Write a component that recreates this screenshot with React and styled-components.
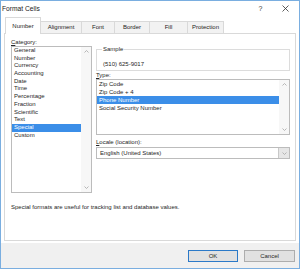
import React from 'react';
import styled, { createGlobalStyle } from 'styled-components';

const GlobalStyle = createGlobalStyle`
  html, body {
    margin: 0;
    padding: 0;
    background: #fff;
  }
  body {
    font-family: 'Liberation Sans', Arial, sans-serif;
  }
`;

const Dialog = styled.div`
  width: 300px;
  height: 269px;
  box-sizing: border-box;
  border: 1px solid #7aaee0;
  background: #fff;
  display: flex;
  flex-direction: column;
  color: #262626;
  font-size: 6px;
`;

const TitleBar = styled.div`
  height: 14px;
  display: flex;
  align-items: center;
  padding: 0 1px 0 1px;
`;

const Title = styled.div`
  flex: 1;
  font-size: 6.7px;
  color: #222;
`;

const TitleButton = styled.div`
  width: 25px;
  height: 14px;
  display: flex;
  align-items: center;
  justify-content: center;
  font-size: 7px;
  color: #333;
`;

const Body = styled.div`
  flex: 1;
  display: flex;
  flex-direction: column;
  padding: 0 3px 2px 3px;
`;

const TabRow = styled.div`
  height: 18px;
  display: flex;
  align-items: flex-end;
  padding-left: 1px;
`;

const Tab = styled.div`
  box-sizing: border-box;
  width: ${(p) => p.$w}px;
  height: ${(p) => (p.$active ? 17 : 12)}px;
  margin-bottom: ${(p) => (p.$active ? -1 : 0)}px;
  margin-left: ${(p) => (p.$first ? 0 : -1)}px;
  border: 1px solid #d9d9d9;
  border-bottom: none;
  background: ${(p) => (p.$active ? '#fff' : '#f2f2f2')};
  position: relative;
  z-index: ${(p) => (p.$active ? 1 : 0)};
  text-align: center;
  line-height: 8px;
  padding-top: ${(p) => (p.$active ? 4 : 1)}px;
  color: #222;
`;

const Panel = styled.div`
  flex: 1;
  border: 1px solid #d9d9d9;
  background: #fff;
  padding: 4px 4px 0 6px;
  display: flex;
  flex-direction: column;
`;

const Columns = styled.div`
  display: grid;
  grid-template-columns: 81px 194px;
  column-gap: 4px;
`;

const Column = styled.div`
  display: flex;
  flex-direction: column;
  padding-top: ${(p) => p.$top || 0}px;
`;

const Label = styled.div`
  line-height: 8px;
  margin-top: ${(p) => p.$mt || 0}px;
  u {
    text-decoration: underline;
  }
`;

const ListBox = styled.div`
  box-sizing: border-box;
  height: ${(p) => p.$h}px;
  border: 1px solid #bcbcbc;
  display: flex;
`;

const Items = styled.div`
  flex: 1;
  display: flex;
  flex-direction: column;
`;

const Item = styled.div`
  height: ${(p) => p.$rh}px;
  line-height: ${(p) => p.$rh}px;
  padding-left: 2px;
  white-space: nowrap;
  background: ${(p) => (p.$selected ? '#3b8ee8' : 'transparent')};
  color: ${(p) => (p.$selected ? '#fff' : '#262626')};
`;

const ScrollBar = styled.div`
  width: 10px;
  background: #f7f7f7;
  display: flex;
  flex-direction: column;
  justify-content: space-between;
  align-items: center;
  padding: 3px 0;
  box-sizing: border-box;
`;

const GroupBox = styled.fieldset`
  margin: 0;
  padding: 7px 6px 2px 6px;
  border: 1px solid #dcdcdc;
  min-width: 0;
  line-height: 8px;

  legend {
    padding: 0 1px;
    margin-left: -1px;
    line-height: 8px;
  }
`;

const Combo = styled.div`
  box-sizing: border-box;
  height: 12px;
  margin-top: 1px;
  border: 1px solid #bcbcbc;
  display: flex;
  align-items: stretch;
`;

const ComboText = styled.div`
  flex: 1;
  line-height: 10px;
  padding-left: 3px;
`;

const ComboButton = styled.div`
  width: 10px;
  background: #e6e6e6;
  border-left: 1px solid #c8c8c8;
  display: flex;
  align-items: center;
  justify-content: center;
`;

const Description = styled.div`
  margin-top: 10px;
  line-height: 8px;
  font-size: 6px;
`;

const Footer = styled.div`
  height: 25px;
  box-sizing: border-box;
  background: #f0f0f0;
  display: flex;
  justify-content: flex-end;
  gap: 6px;
  padding: 7px 4px 0 0;
`;

const Button = styled.div`
  box-sizing: border-box;
  width: ${(p) => p.$w}px;
  height: 12px;
  border: 1px solid ${(p) => (p.$primary ? '#2b79c8' : '#adadad')};
  background: #e1e1e1;
  text-align: center;
  line-height: 10px;
`;

const Chevron = ({ down }) => (
  <svg width="5" height="3" viewBox="0 0 5 3">
    <path
      d={down ? 'M0.5 0.5 L2.5 2.5 L4.5 0.5' : 'M0.5 2.5 L2.5 0.5 L4.5 2.5'}
      fill="none"
      stroke="#a6a6a6"
      strokeWidth="0.8"
    />
  </svg>
);

const CloseIcon = () => (
  <svg width="7" height="7" viewBox="0 0 7 7">
    <path d="M0.5 0.5 L6.5 6.5 M6.5 0.5 L0.5 6.5" stroke="#333" strokeWidth="0.8" />
  </svg>
);

const tabs = [
  ['Number', 36],
  ['Alignment', 42],
  ['Font', 34],
  ['Border', 36],
  ['Fill', 39],
  ['Protection', 37],
];

const categories = [
  'General', 'Number', 'Currency', 'Accounting', 'Date', 'Time',
  'Percentage', 'Fraction', 'Scientific', 'Text', 'Special', 'Custom',
];

const types = ['Zip Code', 'Zip Code + 4', 'Phone Number', 'Social Security Number'];

const App = () => {
  return (
    <>
      <GlobalStyle />
      <Dialog>
        <TitleBar>
          <Title>Format Cells</Title>
          <TitleButton>?</TitleButton>
          <TitleButton><CloseIcon /></TitleButton>
        </TitleBar>

        <Body>
          <TabRow>
            {tabs.map(([name, w], i) => (
              <Tab key={name} $w={w} $first={i === 0} $active={i === 0}>
                {name}
              </Tab>
            ))}
          </TabRow>

          <Panel>
            <Columns>
              <Column>
                <Label><u>C</u>ategory:</Label>
                <ListBox $h={147}>
                  <Items>
                    {categories.map((c) => (
                      <Item key={c} $rh={7.7} $selected={c === 'Special'}>{c}</Item>
                    ))}
                  </Items>
                  <ScrollBar>
                    <Chevron />
                    <Chevron down />
                  </ScrollBar>
                </ListBox>
              </Column>

              <Column $top={7}>
                <GroupBox>
                  <legend>Sample</legend>
                  (510) 625-9017
                </GroupBox>
                <Label><u>T</u>ype:</Label>
                <ListBox $h={56}>
                  <Items>
                    {types.map((t) => (
                      <Item key={t} $rh={8} $selected={t === 'Phone Number'}>{t}</Item>
                    ))}
                  </Items>
                  <ScrollBar>
                    <Chevron />
                    <Chevron down />
                  </ScrollBar>
                </ListBox>
                <Label $mt={3}><u>L</u>ocale (location):</Label>
                <Combo>
                  <ComboText>English (United States)</ComboText>
                  <ComboButton><Chevron down /></ComboButton>
                </Combo>
              </Column>
            </Columns>

            <Description>
              Special formats are useful for tracking list and database values.
            </Description>
          </Panel>
        </Body>

        <Footer>
          <Button $w={50} $primary>OK</Button>
          <Button $w={51}>Cancel</Button>
        </Footer>
      </Dialog>
    </>
  );
};

export default App;
